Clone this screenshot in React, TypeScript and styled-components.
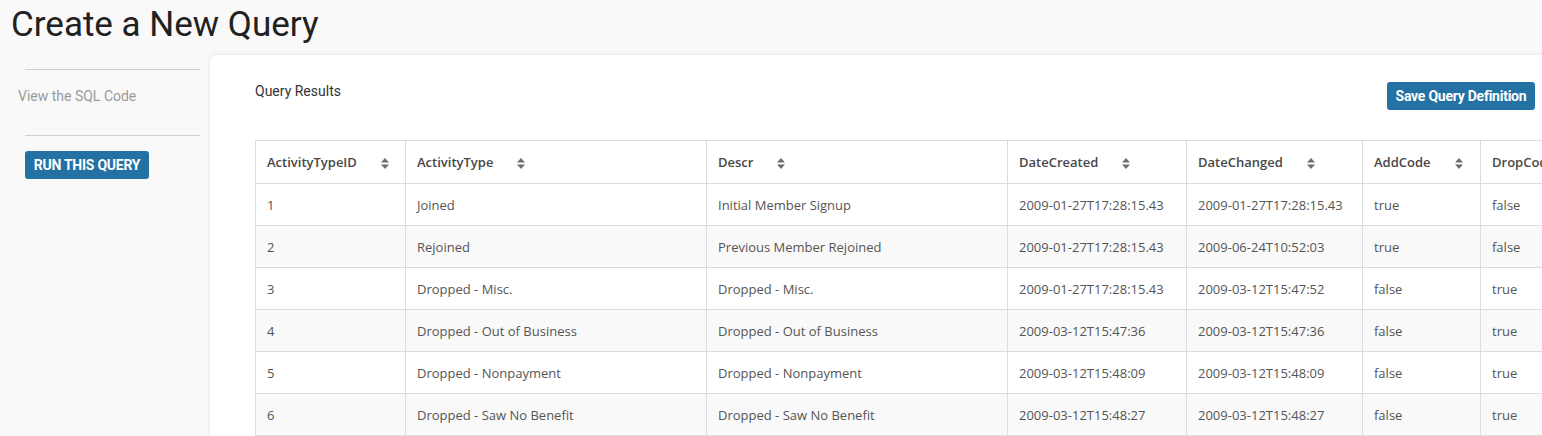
import React from "react";
import styled, { createGlobalStyle } from "styled-components";

const columns = [
  { name: "ActivityTypeID", width: 150 },
  { name: "ActivityType", width: 301 },
  { name: "Descr", width: 301 },
  { name: "DateCreated", width: 179 },
  { name: "DateChanged", width: 176 },
  { name: "AddCode", width: 118 },
  { name: "DropCode", width: 118 },
];

const rows = [
  ["1", "Joined", "Initial Member Signup", "2009-01-27T17:28:15.43", "2009-01-27T17:28:15.43", "true", "false"],
  ["2", "Rejoined", "Previous Member Rejoined", "2009-01-27T17:28:15.43", "2009-06-24T10:52:03", "true", "false"],
  ["3", "Dropped - Misc.", "Dropped - Misc.", "2009-01-27T17:28:15.43", "2009-03-12T15:47:52", "false", "true"],
  ["4", "Dropped - Out of Business", "Dropped - Out of Business", "2009-03-12T15:47:36", "2009-03-12T15:47:36", "false", "true"],
  ["5", "Dropped - Nonpayment", "Dropped - Nonpayment", "2009-03-12T15:48:09", "2009-03-12T15:48:09", "false", "true"],
  ["6", "Dropped - Saw No Benefit", "Dropped - Saw No Benefit", "2009-03-12T15:48:27", "2009-03-12T15:48:27", "false", "true"],
];

const SortIcon = () => (
  <SortSvg width="8" height="11" viewBox="0 0 8 11">
    <path d="M4 0 L8 4.5 H0 Z" fill="#6b6f75" />
    <path d="M4 11 L8 6.5 H0 Z" fill="#6b6f75" />
  </SortSvg>
);

const App = () => {
  return (
    <>
      <GlobalStyle />
      <Page>
        <Title>Create a New Query</Title>
        <Body>
          <Sidebar>
            <Rule />
            <SideLink>View the SQL Code</SideLink>
            <Rule />
            <RunButton>RUN THIS QUERY</RunButton>
          </Sidebar>
          <Panel>
            <PanelHead>
              <PanelTitle>Query Results</PanelTitle>
              <SaveButton>Save Query Definition</SaveButton>
            </PanelHead>
            <Table>
              <colgroup>
                {columns.map((c) => (
                  <col key={c.name} style={{ width: c.width }} />
                ))}
              </colgroup>
              <thead>
                <tr>
                  {columns.map((c) => (
                    <Th key={c.name}>
                      {c.name}
                      <SortIcon />
                    </Th>
                  ))}
                </tr>
              </thead>
              <tbody>
                {rows.map((r, i) => (
                  <Tr key={i} $striped={i % 2 === 1}>
                    {r.map((v, j) => (
                      <Td key={j}>{v}</Td>
                    ))}
                  </Tr>
                ))}
              </tbody>
            </Table>
          </Panel>
        </Body>
      </Page>
    </>
  );
};

export default App;

const GlobalStyle = createGlobalStyle`
  html, body {
    margin: 0;
    padding: 0;
    background: #f9f9f9;
    overflow: hidden;
  }
  * {
    box-sizing: border-box;
  }
`;

const Page = styled.div`
  width: 1542px;
  height: 436px;
  overflow: hidden;
  font-family: Roboto, "Liberation Sans", sans-serif;
`;

const Title = styled.h1`
  margin: 0;
  padding: 2px 0 0 11px;
  height: 55px;
  font-size: 35px;
  font-weight: 400;
  line-height: 46px;
  color: #212121;
`;

const Body = styled.div`
  display: flex;
  align-items: flex-start;
`;

const Sidebar = styled.div`
  flex: 0 0 210px;
  padding: 14px 10px 0 25px;
  display: flex;
  flex-direction: column;
  align-items: flex-start;
`;

const Rule = styled.div`
  width: 175px;
  height: 1px;
  background: #cfcfcf;
`;

const SideLink = styled.div`
  margin: 0 0 0 -7px;
  height: 65px;
  line-height: 52px;
  font-size: 14px;
  color: #9a9a9a;
`;

const Button = styled.button`
  height: 28px;
  border: none;
  border-radius: 3px;
  background: #2471a3;
  color: #fff;
  font-family: Roboto, "Liberation Sans", sans-serif;
  font-weight: 700;
  font-size: 14px;
  letter-spacing: -0.25px;
  padding: 0 6px;
  cursor: pointer;
`;

const RunButton = styled(Button)`
  margin-top: 15px;
  width: 124px;
`;

const SaveButton = styled(Button)`
  width: 148px;
`;

const Panel = styled.div`
  flex: 0 0 1370px;
  height: 400px;
  background: #fff;
  border-top-left-radius: 7px;
  box-shadow: 0 0 4px rgba(0, 0, 0, 0.1);
  padding: 27px 45px 0 45px;
  overflow: hidden;
`;

const PanelHead = styled.div`
  display: flex;
  justify-content: space-between;
  align-items: flex-start;
  height: 58px;
`;

const PanelTitle = styled.div`
  font-size: 14px;
  color: #333;
  line-height: 18px;
`;

const Table = styled.table`
  border-collapse: collapse;
  table-layout: fixed;
  width: 1343px;
  font-family: "Open Sans", "Noto Sans", sans-serif;
  font-size: 13px;
  color: #555;
`;

const Th = styled.th`
  text-align: left;
  font-weight: 600;
  height: 43px;
  padding: 0 11px;
  border: 1px solid #dcdcdc;
  white-space: nowrap;
  overflow: hidden;
  color: #474747;
`;

const SortSvg = styled.svg`
  margin-left: 24px;
  vertical-align: -2px;
`;

const Tr = styled.tr<{ $striped: boolean }>`
  background: ${(p) => (p.$striped ? "#f9f9f9" : "#fff")};
`;

const Td = styled.td`
  height: 42px;
  padding: 0 11px;
  border: 1px solid #dcdcdc;
  white-space: nowrap;
  overflow: hidden;
`;
